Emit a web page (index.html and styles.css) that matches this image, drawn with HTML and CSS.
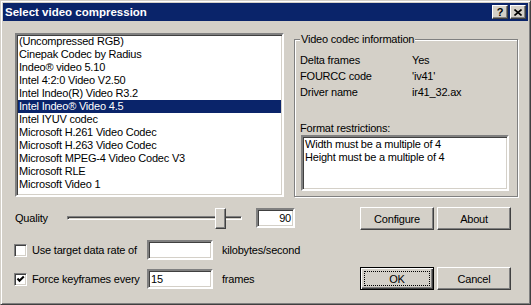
FILE: index.html
```html
<!DOCTYPE html>
<html lang="en">
<head>
    <meta charset="UTF-8" />
    <title>Select video compression</title>
    <link rel="stylesheet" href="styles.css">
</head>
<body>
    <div class="window">
        <div class="titlebar">
            <span class="title">Select video compression</span>
            <div class="caption-buttons">
                <span class="cap-btn help">?</span>
                <span class="cap-btn close">
                    <svg width="8" height="7" viewBox="0 0 8 7"><path d="M0.5 0.5 L7.5 6.5 M7.5 0.5 L0.5 6.5" stroke="#000" stroke-width="1.6" fill="none"/></svg>
                </span>
            </div>
        </div>

        <div class="client">
            <div class="top">
                <ul class="listbox">
                    <li>(Uncompressed RGB)</li>
                    <li>Cinepak Codec by Radius</li>
                    <li>Indeo® video 5.10</li>
                    <li>Intel 4:2:0 Video V2.50</li>
                    <li>Intel Indeo(R) Video R3.2</li>
                    <li class="selected">Intel Indeo® Video 4.5</li>
                    <li>Intel IYUV codec</li>
                    <li>Microsoft H.261 Video Codec</li>
                    <li>Microsoft H.263 Video Codec</li>
                    <li>Microsoft MPEG-4 Video Codec V3</li>
                    <li>Microsoft RLE</li>
                    <li>Microsoft Video 1</li>
                </ul>

                <div class="group">
                    <span class="group-label">Video codec information</span>
                    <div class="info-row"><span class="info-key">Delta frames</span><span>Yes</span></div>
                    <div class="info-row"><span class="info-key">FOURCC code</span><span>'iv41'</span></div>
                    <div class="info-row"><span class="info-key">Driver name</span><span>ir41_32.ax</span></div>
                    <div class="restrict-label">Format restrictions:</div>
                    <div class="restrict-box">
                        Width must be a multiple of 4<br>
                        Height must be a multiple of 4
                    </div>
                </div>
            </div>

            <div class="bottom">
                <div class="options">
                    <div class="quality-row">
                        <span class="quality-label">Quality</span>
                        <div class="slider">
                            <div class="track"></div>
                            <div class="thumb" style="left: 148px"></div>
                        </div>
                        <div class="edit quality-edit">90</div>
                    </div>
                    <div class="check-row rate-row">
                        <span class="checkbox"></span>
                        <span class="check-label">Use target data rate of</span>
                        <div class="edit num-edit"></div>
                        <span class="unit">kilobytes/second</span>
                    </div>
                    <div class="check-row">
                        <span class="checkbox checked">
                            <svg width="9" height="9" viewBox="0 0 9 9"><path d="M1.5 3.5 L3.5 5.8 L7.8 1.5" stroke="#000" stroke-width="2" fill="none"/></svg>
                        </span>
                        <span class="check-label">Force keyframes every</span>
                        <div class="edit num-edit">15</div>
                        <span class="unit">frames</span>
                    </div>
                </div>
                <div class="buttons">
                    <div class="btn-row">
                        <button class="btn">Configure</button>
                        <button class="btn">About</button>
                    </div>
                    <div class="btn-row">
                        <button class="btn default"><span class="focus">OK</span></button>
                        <button class="btn">Cancel</button>
                    </div>
                </div>
            </div>
        </div>
    </div>
</body>
</html>
```

FILE: styles.css
```css
body {
    margin: 0;
    background-color: #d4d0c8;
    font-family: "Liberation Sans", Arial, sans-serif;
    font-size: 11px;
    letter-spacing: -0.2px;
    color: #000;
}

.window {
    box-sizing: border-box;
    width: 531px;
    height: 305px;
    background-color: #d4d0c8;
    border: 1px solid;
    border-color: #d4d0c8 #404040 #404040 #d4d0c8;
    box-shadow: inset 1px 1px #fff, inset -1px -1px #808080;
    padding: 2px;
    display: flex;
    flex-direction: column;
}

.titlebar {
    height: 18px;
    background-color: #0a246a;
    color: white;
    display: flex;
    align-items: center;
    justify-content: space-between;
    padding-left: 2px;
}

.title {
    font-weight: bold;
    font-size: 11.5px;
    letter-spacing: 0;
}

.caption-buttons {
    display: flex;
    gap: 2px;
    margin-right: 2px;
}

.cap-btn {
    box-sizing: border-box;
    width: 16px;
    height: 14px;
    background-color: #d4d0c8;
    border: 1px solid;
    border-color: #fff #404040 #404040 #fff;
    box-shadow: inset -1px -1px #808080;
    color: #000;
    display: flex;
    align-items: center;
    justify-content: center;
}

.help {
    font-weight: bold;
    font-size: 11px;
    letter-spacing: 0;
    line-height: 12px;
}

.client {
    flex: 1;
    padding: 12px 10px 0 12px;
}

.top {
    display: flex;
    height: 164px;
}

.listbox {
    box-sizing: border-box;
    width: 269px;
    margin: 0;
    padding: 0;
    list-style: none;
    background-color: white;
    border: 2px solid;
    border-color: #808080 #fff #fff #808080;
    box-shadow: inset 1px 1px #404040, inset -1px -1px #d4d0c8;
    padding: 0 1px;
}

.listbox li {
    height: 13px;
    line-height: 13px;
    padding-left: 1px;
    white-space: nowrap;
}

.listbox .selected {
    background-color: #0a246a;
    color: white;
}

.group {
    position: relative;
    flex: 1;
    margin: 6px 0 0 10px;
    border: 1px solid #808080;
    box-shadow: inset 1px 1px #fff, 1px 1px #fff;
    padding: 12px 8px 5px 5px;
    display: flex;
    flex-direction: column;
}

.group-label {
    position: absolute;
    top: -7px;
    left: 5px;
    padding: 0 1px;
    line-height: 13px;
    background-color: #d4d0c8;
}

.info-row {
    display: flex;
    line-height: 16px;
}

.info-key {
    width: 112px;
}

.restrict-label {
    margin-top: 22px;
    line-height: 13px;
}

.restrict-box {
    flex: 1;
    margin-left: 1px;
    background-color: white;
    border: 2px solid;
    border-color: #808080 #fff #fff #808080;
    box-shadow: inset 1px 1px #404040, inset -1px -1px #d4d0c8;
    padding: 1px 2px;
    line-height: 13px;
}

.bottom {
    display: flex;
    margin-top: 10px;
}

.options {
    flex: 1;
    display: flex;
    flex-direction: column;
}

.quality-row {
    display: flex;
    align-items: center;
    height: 22px;
    margin-bottom: 11px;
}

.quality-label {
    width: 52px;
}

.slider {
    position: relative;
    width: 175px;
    height: 22px;
    display: flex;
    align-items: center;
}

.track {
    box-sizing: border-box;
    width: 100%;
    height: 4px;
    border: 1px solid;
    border-color: #808080 #fff #fff #808080;
    box-shadow: inset 1px 1px #404040;
}

.thumb {
    position: absolute;
    top: 1px;
    box-sizing: border-box;
    width: 11px;
    height: 21px;
    background-color: #d4d0c8;
    border: 1px solid;
    border-color: #fff #404040 #404040 #fff;
    box-shadow: inset -1px -1px #808080;
}

.edit {
    box-sizing: border-box;
    height: 20px;
    background-color: white;
    border: 2px solid;
    border-color: #808080 #fff #fff #808080;
    box-shadow: inset 1px 1px #404040, inset -1px -1px #d4d0c8;
    line-height: 16px;
    padding: 0 2px;
}

.quality-edit {
    width: 39px;
    margin-left: 14px;
    text-align: right;
}

.check-row {
    display: flex;
    align-items: center;
    height: 20px;
}

.rate-row {
    margin-bottom: 9px;
}

.checkbox {
    box-sizing: border-box;
    width: 13px;
    height: 13px;
    margin-left: -1px;
    background-color: white;
    border: 1px solid;
    border-color: #808080 #fff #fff #808080;
    box-shadow: inset 1px 1px #404040, inset -1px -1px #d4d0c8;
    display: flex;
    align-items: center;
    justify-content: center;
}

.check-label {
    width: 115px;
    margin-left: 5px;
}

.num-edit {
    width: 66px;
}

.unit {
    margin-left: 9px;
}

.buttons {
    display: flex;
    flex-direction: column;
    justify-content: space-between;
    height: 83px;
    margin-right: 7px;
}

.btn-row {
    display: flex;
    gap: 3px;
}

.btn {
    box-sizing: border-box;
    width: 74px;
    height: 23px;
    padding: 0;
    background-color: #d4d0c8;
    border: 1px solid;
    border-color: #fff #404040 #404040 #fff;
    box-shadow: inset -1px -1px #808080;
    font-family: "Liberation Sans", Arial, sans-serif;
    font-size: 11px;
    letter-spacing: -0.2px;
    color: #000;
}

.btn.default {
    border: 1px solid #000;
    box-shadow: inset 1px 1px #fff, inset -1px -1px #404040, inset -2px -2px #808080;
    padding: 3px;
    display: flex;
}

.focus {
    flex: 1;
    border: 1px dotted #000;
    display: flex;
    align-items: center;
    justify-content: center;
}
```
